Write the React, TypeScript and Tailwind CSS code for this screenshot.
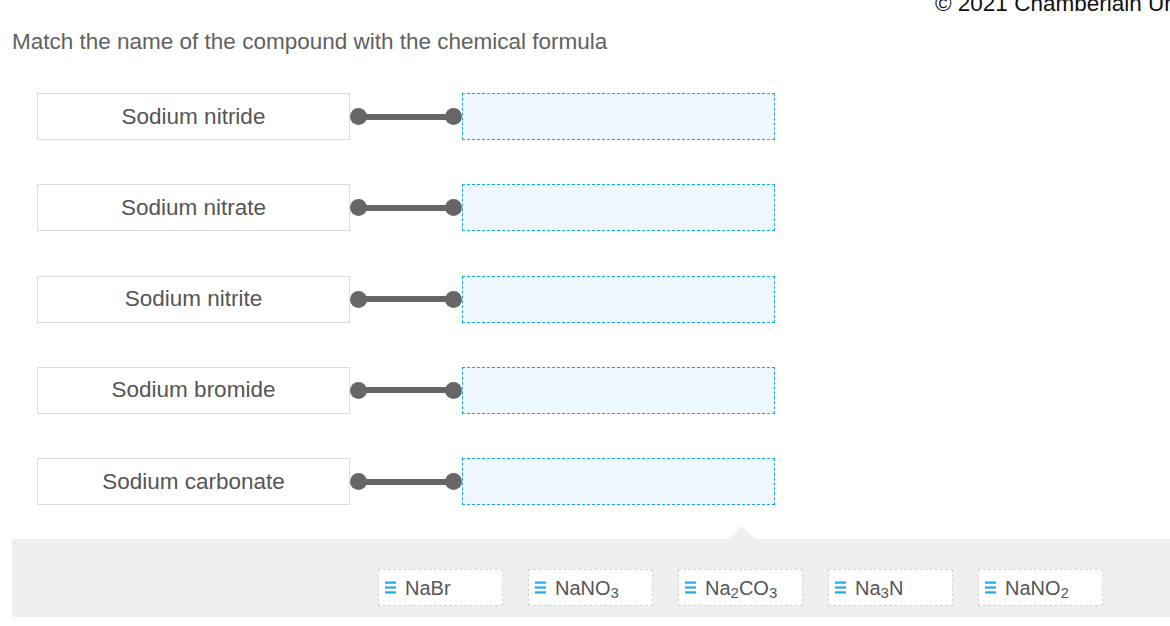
import React from 'react';

const font = { fontFamily: '"Liberation Sans", Arial, Helvetica, sans-serif' };

const names = ['Sodium nitride', 'Sodium nitrate', 'Sodium nitrite', 'Sodium bromide', 'Sodium carbonate'];

const chips: React.ReactNode[] = [
  <>NaBr</>,
  <>NaNO<sub>3</sub></>,
  <>Na<sub>2</sub>CO<sub>3</sub></>,
  <>Na<sub>3</sub>N</>,
  <>NaNO<sub>2</sub></>,
];

const Grip = () => (
  <svg width="11" height="13" viewBox="0 0 11 13" className="shrink-0">
    <rect x="0" y="0.5" width="11" height="2.2" fill="#1eaaf1" />
    <rect x="0" y="5.4" width="11" height="2.2" fill="#1eaaf1" />
    <rect x="0" y="10.3" width="11" height="2.2" fill="#1eaaf1" />
  </svg>
);

const Connector = () => (
  <div className="relative w-[112px] h-[47px] flex items-center">
    <div className="absolute left-[8px] right-[8px] h-[6px] bg-[#666666]" />
    <div className="absolute left-0 w-[17px] h-[17px] rounded-full bg-[#666666]" />
    <div className="absolute right-0 w-[17px] h-[17px] rounded-full bg-[#666666]" />
  </div>
);

export default function App() {
  return (
    <div className="w-full min-h-[626px] bg-white overflow-hidden" style={font}>
      {/* copyright strip, clipped at the top of the window */}
      <div className="h-[14px] overflow-hidden relative">
        <div className="absolute left-[935px] top-[-6px] whitespace-nowrap text-[22.5px] leading-[20px] text-[#111]">
          © 2021 Chamberlain Un
        </div>
      </div>

      <h1 className="mt-[15px] ml-[12px] text-[22.5px] leading-[26px] text-[#616161]">
        Match the name of the compound with the chemical formula
      </h1>

      <div className="mt-[38px] ml-[37px] flex flex-col gap-[44.25px]">
        {names.map((n) => (
          <div key={n} className="flex items-center">
            <div className="w-[313px] h-[47px] border border-[#dcdcdc] flex items-center justify-center text-[22.5px] text-[#555555]">
              {n}
            </div>
            <Connector />
            <div className="w-[313px] h-[47px] border border-dashed border-[#1aa9f0] bg-[#eef6fe]" />
          </div>
        ))}
      </div>

      <div className="relative mt-[34px] ml-[12px] h-[78px] bg-[#efefef]">
        <div className="absolute top-[-13px] left-[717px] w-0 h-0 border-l-[13px] border-r-[13px] border-b-[13px] border-l-transparent border-r-transparent border-b-[#efefef]" />
        <div className="flex gap-[25px] pl-[366px] pt-[30px]">
          {chips.map((c, i) => (
            <div
              key={i}
              className="w-[125px] h-[37px] bg-white border border-dashed border-[#d4d4d4] flex items-center gap-[9px] pl-[6px] text-[20px] text-[#555555]"
            >
              <Grip />
              <span className="leading-none">{c}</span>
            </div>
          ))}
        </div>
      </div>
    </div>
  );
}
